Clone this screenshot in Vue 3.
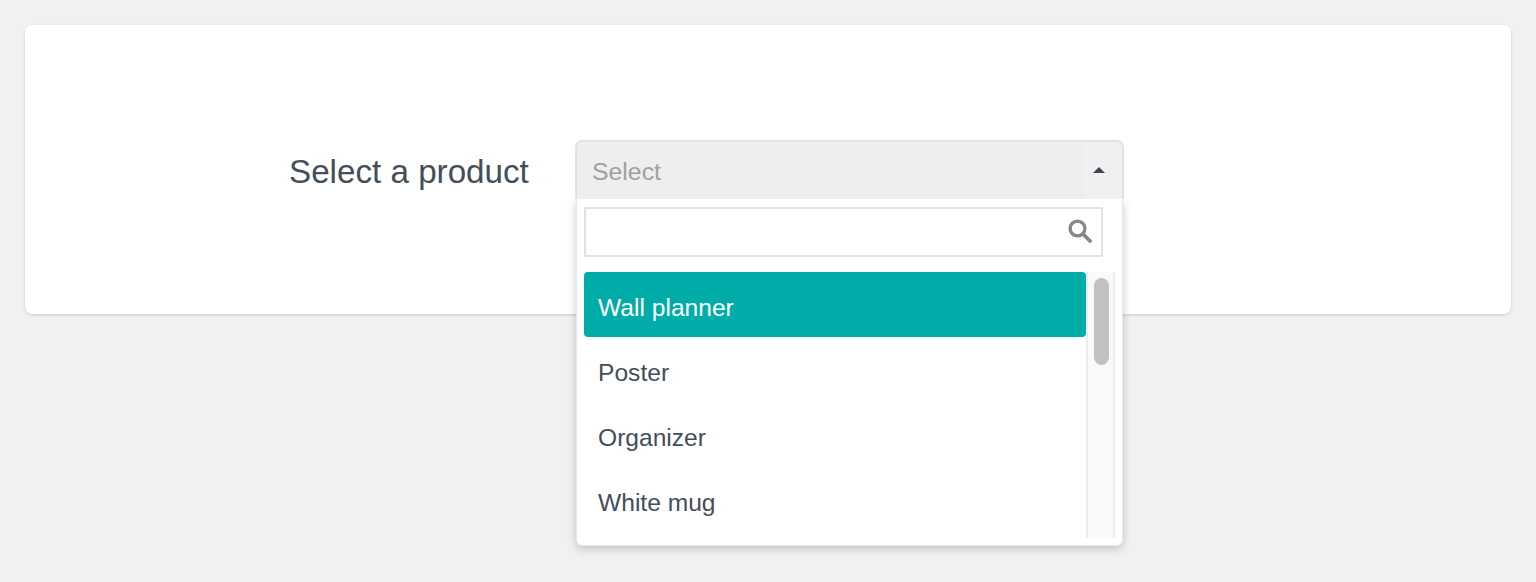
<script setup>
const products = ['Wall planner', 'Poster', 'Organizer', 'White mug']
</script>

<template>
  <div class="page">
    <section class="card">
      <label class="label">Select a product</label>
      <div class="select">
        <div class="control">
          <span class="placeholder">Select</span>
          <span class="arrow-box"><span class="arrow"></span></span>
        </div>
        <div class="dropdown">
          <div class="search">
            <svg class="search-icon" viewBox="0 0 24 24" width="24" height="24" aria-hidden="true">
              <circle cx="9.5" cy="9.5" r="7.4" fill="none" stroke="#878787" stroke-width="3.4" />
              <path d="M15 15 L22 22" stroke="#878787" stroke-width="3.8" stroke-linecap="round" />
            </svg>
          </div>
          <div class="results">
            <ul class="list">
              <li v-for="(p, i) in products" :key="p" class="option" :class="{ active: i === 0 }">{{ p }}</li>
            </ul>
            <div class="track"><div class="thumb"></div></div>
          </div>
        </div>
      </div>
    </section>
  </div>
</template>

<style>
html, body { margin: 0; background: #f1f1f1; }
</style>

<style scoped>
.page {
  height: 582px;
  box-sizing: border-box;
  padding: 25px;
  background: #f1f1f1;
  overflow: hidden;
  font-family: "Liberation Sans", Arial, sans-serif;
}
.card {
  height: 289px;
  box-sizing: border-box;
  padding: 115px 0 0 264px;
  background: #fff;
  border-radius: 7px;
  box-shadow: 0 1px 3px rgba(0, 0, 0, 0.16);
  display: flex;
  align-items: flex-start;
}
.label {
  width: 240px;
  margin-right: 46px;
  height: 60px;
  line-height: 63px;
  font-size: 33.2px;
  color: #444e5a;
  white-space: nowrap;
}
.select {
  position: relative;
  width: 549px;
}
.control {
  height: 59px;
  box-sizing: border-box;
  display: flex;
  align-items: stretch;
  justify-content: space-between;
  background: #eeeeee;
  border: 2px solid #e2e2e2;
  border-bottom: 0;
  border-radius: 7px 7px 0 0;
}
.placeholder {
  padding-left: 15px;
  line-height: 59px;
  font-size: 24.8px;
  color: #a0a0a0;
}
.arrow-box {
  width: 38px;
  box-sizing: border-box;
  padding-right: 9px;
  background: #f0f0f0;
  display: flex;
  align-items: center;
  justify-content: center;
  border-top-right-radius: 6px;
}
.arrow {
  width: 0;
  height: 0;
  margin-top: -1px;
  border-left: 6px solid transparent;
  border-right: 6px solid transparent;
  border-bottom: 6px solid #3c4652;
}
.dropdown {
  position: absolute;
  top: 59px;
  left: 1px;
  width: 547px;
  height: 347px;
  box-sizing: border-box;
  padding: 8px 7px 0 7px;
  background: #fff;
  border: 1px solid #e8e8e8;
  border-top: 0;
  border-radius: 0 0 6px 6px;
  box-shadow: 0 3px 10px rgba(0, 0, 0, 0.2);
  clip-path: inset(0 -24px -24px -24px);
  z-index: 2;
}
.search {
  position: relative;
  width: 519px;
  height: 50px;
  box-sizing: border-box;
  border: 2px solid #e2e2e2;
}
.search-icon {
  position: absolute;
  right: 9px;
  top: 10px;
}
.results {
  margin-top: 15px;
  height: 266px;
  display: flex;
  overflow: hidden;
}
.list {
  list-style: none;
  margin: 0;
  padding: 0;
  width: 502px;
  flex: none;
}
.option {
  height: 65px;
  line-height: 72px;
  padding-left: 14px;
  font-size: 24.6px;
  color: #444e5a;
  border-radius: 4px;
}
.option.active {
  background: #00aca8;
  color: #fff;
}
.track {
  width: 29px;
  flex: none;
  height: 100%;
  box-sizing: border-box;
  background: #f9f9f9;
  border-left: 2px solid #ececec;
  border-right: 2px solid #ececec;
  padding: 6px 4px 0 6px;
}
.thumb {
  height: 87px;
  background: #c1c1c1;
  border-radius: 8px;
}
</style>
